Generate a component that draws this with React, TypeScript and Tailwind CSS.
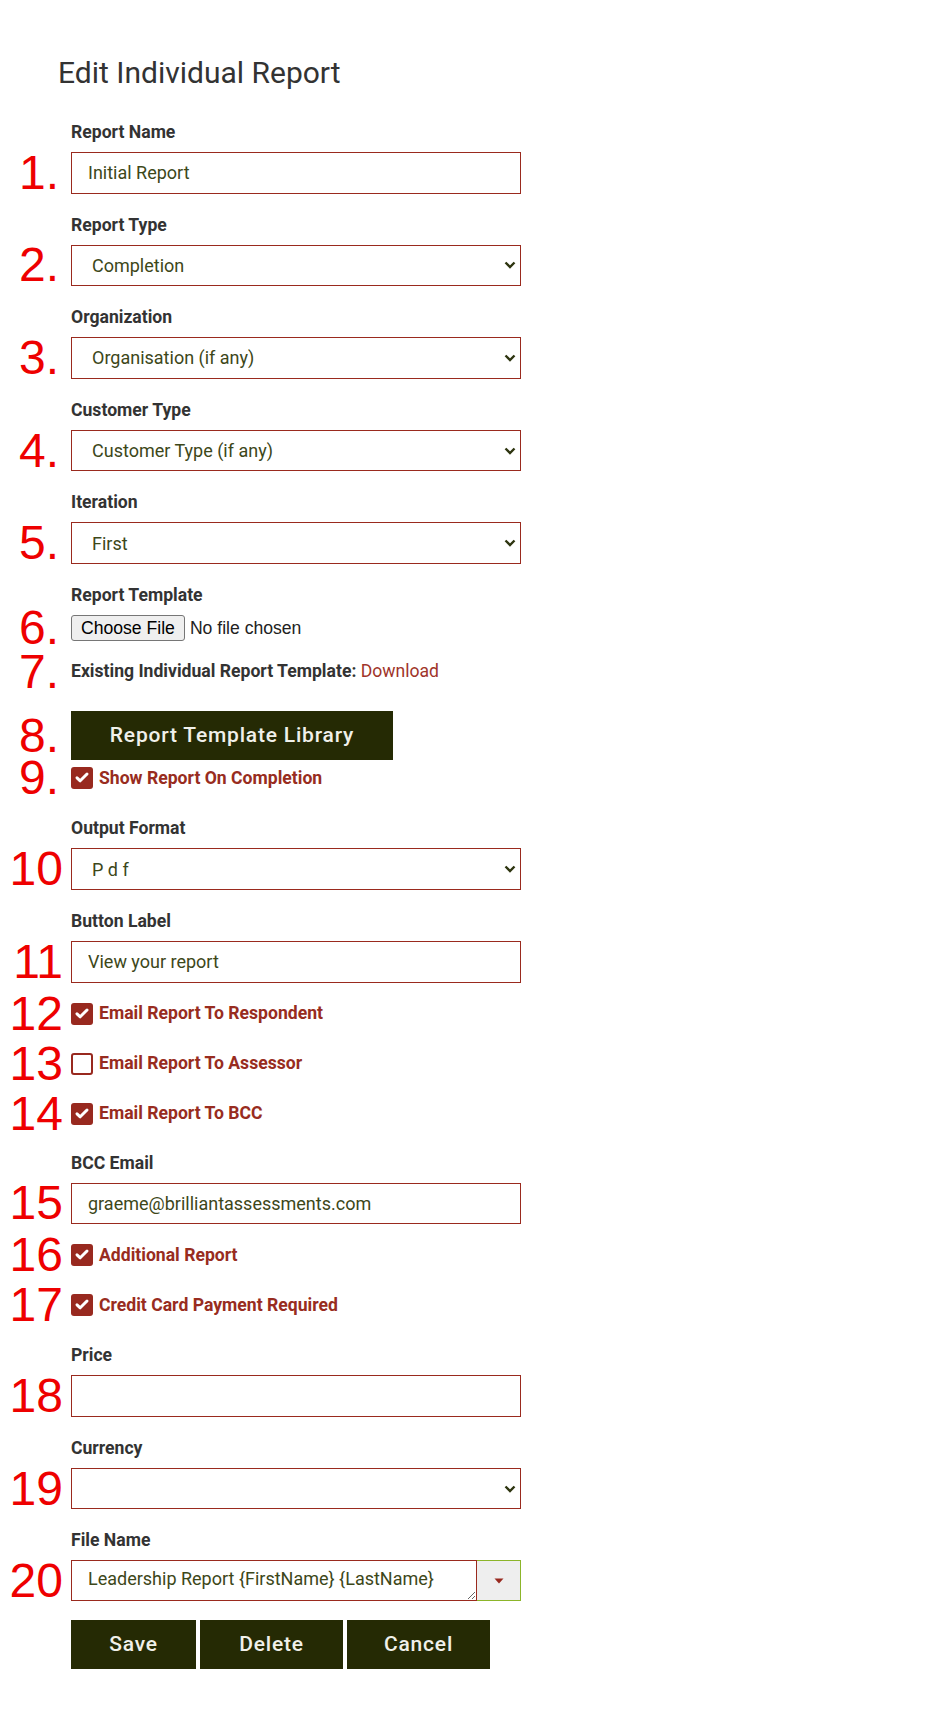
import React from 'react';

const borderRed = 'border-[#9a2a1e]';

// red annotation number on the left of each row
const Num = ({ n }: { n: string }) => (
  <div className="w-[71px] shrink-0 self-center h-0 flex items-center justify-end">
    <span
      className={`font-['Liberation_Sans',Arial,sans-serif] text-[48px] leading-[34px] text-[#ee0000] ${
        n.endsWith('.') ? 'pr-[12px]' : 'pr-[8px]'
      }`}
    >
      {n}
    </span>
  </div>
);

const Row = ({ n, mt, children }: { n: string; mt: string; children: React.ReactNode }) => (
  <div className={`flex ${mt}`}>
    <Num n={n} />
    <div className="w-[450px]">{children}</div>
  </div>
);

const Label = ({ mt, children }: { mt: string; children: React.ReactNode }) => (
  <div className={`ml-[71px] text-[17.6px] leading-[21px] font-bold text-[#333333] ${mt}`}>{children}</div>
);

const TextInput = ({ value }: { value: string }) => (
  <input
    type="text"
    defaultValue={value}
    className={`block w-full h-[41.6px] border ${borderRed} bg-white px-4 text-[18px] text-[#3d4719] outline-none`}
  />
);

const Select = ({ value }: { value: string }) => (
  <div className="relative">
    <select
      defaultValue={value}
      className={`block w-full h-[41.6px] appearance-none border ${borderRed} bg-white pl-[20px] pr-8 text-[18px] text-[#3d4719] outline-none`}
    >
      <option value={value}>{value}</option>
    </select>
    <svg
      className="pointer-events-none absolute right-[5px] top-1/2 -translate-y-1/2"
      width="12"
      height="8"
      viewBox="0 0 12 8"
      fill="none"
    >
      <path d="M1.5 1.5 6 6l4.5-4.5" stroke="#2e3510" strokeWidth="2.4" />
    </svg>
  </div>
);

const Check = ({ checked, label }: { checked: boolean; label: string }) => (
  <div className="flex items-center">
    {checked ? (
      <span className="flex h-[22px] w-[22px] items-center justify-center rounded-[3px] bg-[#98291f]">
        <svg width="22" height="22" viewBox="0 0 22 22" fill="none">
          <path
            d="M6 10.8 9.2 13.8 16 7"
            stroke="#ffffff"
            strokeWidth="3"
            strokeLinecap="round"
            strokeLinejoin="round"
          />
        </svg>
      </span>
    ) : (
      <span className="h-[22px] w-[22px] rounded-[3px] border-2 border-[#98291f] bg-white" />
    )}
    <span className="ml-[6px] text-[17.6px] leading-[21px] font-bold text-[#982c20]">{label}</span>
  </div>
);

const DarkButton = ({ w, children }: { w: string; children: React.ReactNode }) => (
  <button
    type="button"
    className={`flex h-[49px] ${w} items-center justify-center bg-[#252a04] text-[21px] font-medium tracking-[0.8px] text-[#f0f0ea]`}
  >
    {children}
  </button>
);

export default function App() {
  return (
    <div className="min-h-screen bg-white pt-[55px] pb-[57px] font-['Roboto',sans-serif]">
      <h1 className="ml-[58px] text-[30px] leading-[36px] font-normal text-[#333333]">Edit Individual Report</h1>

      <Label mt="mt-[31px]">Report Name</Label>
      <Row n="1." mt="mt-[9px]">
        <TextInput value="Initial Report" />
      </Row>

      <Label mt="mt-[21px]">Report Type</Label>
      <Row n="2." mt="mt-[9px]">
        <Select value="Completion" />
      </Row>

      <Label mt="mt-[21px]">Organization</Label>
      <Row n="3." mt="mt-[9px]">
        <Select value="Organisation (if any)" />
      </Row>

      <Label mt="mt-[21px]">Customer Type</Label>
      <Row n="4." mt="mt-[9px]">
        <Select value="Customer Type (if any)" />
      </Row>

      <Label mt="mt-[21px]">Iteration</Label>
      <Row n="5." mt="mt-[9px]">
        <Select value="First" />
      </Row>

      <Label mt="mt-[21px]">Report Template</Label>
      <Row n="6." mt="mt-[9px]">
        <div className="flex items-center font-['Liberation_Sans',Arial,sans-serif] text-[17.6px] text-[#222222]">
          <span className="inline-flex h-[26px] items-center rounded-[3px] border border-[#767676] bg-[#efefef] px-[9px] text-black">
            Choose File
          </span>
          <span className="ml-[5px]">No file chosen</span>
        </div>
      </Row>

      <Row n="7." mt="mt-[20px]">
        <div className="text-[17.6px] leading-[21px]">
          <span className="font-bold text-[#333333]">Existing Individual Report Template:</span>{' '}
          <a className="text-[#a0342a]">Download</a>
        </div>
      </Row>

      <Row n="8." mt="mt-[29px]">
        <DarkButton w="w-[322px]">Report Template Library</DarkButton>
      </Row>

      <Row n="9." mt="mt-[7px]">
        <Check checked label="Show Report On Completion" />
      </Row>

      <Label mt="mt-[29px]">Output Format</Label>
      <Row n="10" mt="mt-[9px]">
        <Select value="P d f" />
      </Row>

      <Label mt="mt-[21px]">Button Label</Label>
      <Row n="11" mt="mt-[9px]">
        <TextInput value="View your report" />
      </Row>

      <Row n="12" mt="mt-[20px]">
        <Check checked label="Email Report To Respondent" />
      </Row>
      <Row n="13" mt="mt-[28px]">
        <Check checked={false} label="Email Report To Assessor" />
      </Row>
      <Row n="14" mt="mt-[28px]">
        <Check checked label="Email Report To BCC" />
      </Row>

      <Label mt="mt-[28px]">BCC Email</Label>
      <Row n="15" mt="mt-[9px]">
        <TextInput value="graeme@brilliantassessments.com" />
      </Row>

      <Row n="16" mt="mt-[20px]">
        <Check checked label="Additional Report" />
      </Row>
      <Row n="17" mt="mt-[28px]">
        <Check checked label="Credit Card Payment Required" />
      </Row>

      <Label mt="mt-[29px]">Price</Label>
      <Row n="18" mt="mt-[9px]">
        <TextInput value="" />
      </Row>

      <Label mt="mt-[21px]">Currency</Label>
      <Row n="19" mt="mt-[9px]">
        <Select value="" />
      </Row>

      <Label mt="mt-[21px]">File Name</Label>
      <Row n="20" mt="mt-[9px]">
        <div className="flex h-[41px]">
          <textarea
            defaultValue="Leadership Report {FirstName} {LastName}"
            className={`block h-[41px] flex-1 overflow-hidden border ${borderRed} bg-white pl-4 pt-[6px] text-[18px] leading-[24px] text-[#3d4719] outline-none`}
          />
          <button
            type="button"
            className="flex w-[44px] items-center justify-center border border-l-0 border-[#8cb52a] bg-[#eeeeee]"
          >
            <svg width="10" height="6" viewBox="0 0 10 6">
              <path d="M0.5 0.5h9L5 5.5z" fill="#98291f" />
            </svg>
          </button>
        </div>
      </Row>

      <div className="ml-[71px] mt-[19px] flex gap-[4px]">
        <DarkButton w="w-[125px]">Save</DarkButton>
        <DarkButton w="w-[143px]">Delete</DarkButton>
        <DarkButton w="w-[143px]">Cancel</DarkButton>
      </div>
    </div>
  );
}
